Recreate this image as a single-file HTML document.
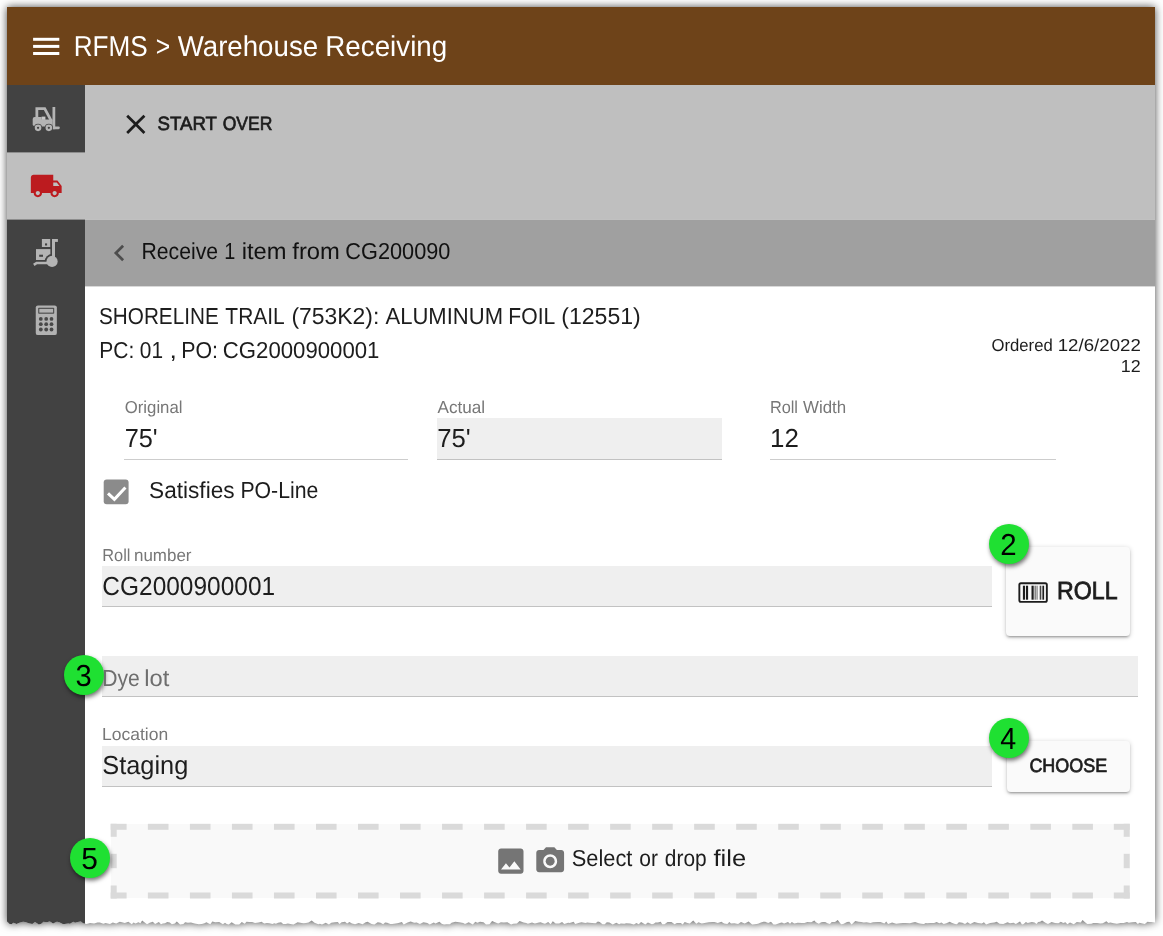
<!DOCTYPE html>
<html>
<head>
<meta charset="utf-8">
<title>RFMS Warehouse Receiving</title>
<style>
html,body{margin:0;padding:0;}
body{width:1163px;height:936px;overflow:hidden;background:#fefefe;font-family:"Liberation Sans",sans-serif;position:relative;color:#1d1d1d;}
#wrap{position:absolute;left:0;top:0;width:1163px;height:936px;filter:drop-shadow(0 0.5px 4.5px rgba(0,0,0,.72));}
#app{position:absolute;left:0;top:0;width:1163px;height:936px;background:#fff;clip-path:polygon(7.0px 7.0px,1155.0px 7.0px,1155.0px 923.0px,1155.0px 922.6px,1151.7px 921.9px,1149.2px 921.9px,1147.5px 921.8px,1144.8px 924.0px,1142.6px 923.5px,1139.5px 922.8px,1137.8px 924.1px,1135.8px 922.0px,1132.1px 922.2px,1128.8px 922.7px,1127.0px 921.9px,1123.7px 922.9px,1120.5px 923.0px,1116.9px 923.7px,1113.8px 923.2px,1110.3px 922.5px,1108.4px 922.9px,1106.4px 921.3px,1102.8px 923.3px,1100.4px 923.6px,1097.3px 923.0px,1093.2px 923.0px,1091.5px 923.7px,1087.3px 924.0px,1084.7px 922.0px,1082.6px 920.1px,1080.7px 922.4px,1076.8px 921.9px,1073.8px 924.2px,1070.0px 922.5px,1067.4px 924.2px,1065.4px 922.2px,1063.2px 923.1px,1060.9px 921.7px,1058.4px 923.3px,1055.0px 923.1px,1051.6px 921.9px,1048.0px 924.1px,1045.4px 922.8px,1042.1px 920.6px,1040.1px 921.7px,1038.1px 922.0px,1036.5px 924.1px,1034.5px 922.4px,1031.9px 922.0px,1027.7px 923.0px,1025.9px 922.0px,1023.6px 924.0px,1022.0px 924.4px,1020.0px 921.6px,1015.8px 924.1px,1013.6px 922.7px,1010.0px 923.2px,1007.5px 922.3px,1003.3px 924.1px,999.6px 923.8px,996.7px 921.7px,994.3px 922.4px,990.2px 923.0px,986.1px 924.4px,983.9px 922.3px,981.8px 923.4px,978.0px 923.0px,974.3px 921.9px,970.3px 923.9px,967.5px 922.2px,965.0px 923.9px,962.4px 922.8px,958.9px 922.2px,956.9px 924.2px,955.0px 924.0px,951.6px 922.7px,949.7px 921.7px,946.4px 923.2px,943.7px 924.1px,941.5px 922.4px,939.3px 923.3px,936.6px 922.1px,934.1px 923.0px,930.2px 922.9px,927.2px 923.2px,925.6px 922.9px,924.0px 923.9px,921.2px 923.7px,918.7px 923.2px,915.1px 922.0px,912.8px 922.5px,909.9px 923.3px,905.9px 922.9px,903.0px 923.1px,900.2px 923.2px,896.2px 923.7px,892.1px 922.4px,888.1px 924.1px,886.2px 921.6px,884.4px 923.6px,880.5px 922.1px,877.1px 922.1px,873.0px 922.3px,870.4px 923.1px,866.6px 922.2px,863.7px 922.6px,861.3px 922.1px,858.5px 921.8px,855.3px 921.0px,851.6px 924.4px,849.3px 921.8px,847.0px 922.1px,843.1px 924.0px,841.1px 924.3px,837.7px 920.1px,835.0px 921.9px,831.7px 921.9px,829.9px 924.1px,827.5px 923.2px,825.2px 922.1px,822.9px 922.0px,821.2px 922.3px,818.8px 923.8px,815.9px 922.2px,814.3px 920.5px,811.2px 922.2px,807.2px 922.0px,804.5px 923.1px,801.9px 923.1px,797.7px 922.7px,794.3px 923.5px,791.8px 921.9px,790.0px 923.8px,788.0px 921.9px,784.1px 923.6px,781.9px 922.5px,779.8px 922.9px,775.7px 924.4px,773.5px 924.4px,771.0px 921.7px,768.2px 923.1px,765.2px 921.7px,763.4px 921.8px,761.0px 922.4px,758.0px 923.8px,754.6px 924.2px,752.1px 924.5px,748.6px 921.5px,744.7px 923.5px,741.0px 922.1px,738.1px 924.0px,734.4px 923.3px,731.0px 923.6px,729.3px 922.1px,727.4px 924.0px,724.2px 923.5px,721.3px 921.7px,717.8px 923.1px,714.5px 921.9px,712.2px 921.9px,708.7px 922.3px,704.6px 923.1px,701.7px 923.6px,698.5px 922.3px,696.3px 923.8px,693.2px 920.4px,689.8px 923.6px,687.5px 923.1px,684.7px 922.0px,682.6px 924.4px,680.9px 923.0px,676.8px 923.0px,674.6px 924.3px,671.5px 922.1px,667.5px 922.1px,664.5px 924.2px,662.3px 924.2px,660.7px 921.7px,657.9px 922.5px,655.4px 922.6px,653.8px 923.8px,651.9px 924.3px,647.9px 922.5px,645.3px 924.5px,642.8px 922.9px,641.1px 922.0px,638.7px 924.3px,636.4px 923.1px,633.9px 924.4px,630.1px 923.5px,626.1px 923.2px,624.4px 923.8px,620.8px 923.5px,619.1px 924.3px,616.3px 922.7px,612.7px 924.4px,609.4px 922.5px,606.8px 922.2px,604.7px 924.2px,602.5px 924.2px,599.7px 922.1px,597.9px 921.4px,595.6px 923.3px,592.1px 922.9px,589.1px 922.8px,587.3px 922.5px,585.4px 923.1px,581.6px 922.3px,579.3px 922.8px,575.2px 924.1px,573.6px 921.8px,569.7px 923.0px,568.1px 922.8px,564.3px 924.1px,562.1px 922.0px,559.1px 923.6px,555.6px 923.5px,552.8px 921.3px,550.6px 924.3px,548.2px 922.1px,545.0px 923.7px,543.2px 923.2px,540.6px 922.3px,539.0px 922.5px,534.9px 923.5px,532.0px 922.4px,527.9px 923.7px,526.3px 923.1px,523.6px 922.4px,519.6px 920.9px,516.9px 923.6px,513.2px 923.8px,511.1px 924.4px,507.4px 922.3px,503.8px 922.5px,500.9px 922.2px,498.2px 923.6px,496.2px 922.8px,492.1px 921.0px,489.5px 924.2px,486.0px 924.5px,483.5px 922.2px,480.0px 921.8px,477.4px 922.7px,475.3px 921.7px,472.8px 924.4px,468.7px 922.3px,465.0px 924.0px,463.3px 923.0px,459.3px 922.2px,455.3px 921.8px,451.6px 922.8px,449.9px 924.3px,446.3px 924.2px,444.0px 924.4px,441.7px 923.7px,439.4px 921.7px,435.4px 923.5px,433.8px 922.4px,429.7px 924.4px,427.4px 922.9px,423.4px 922.2px,419.9px 924.0px,416.7px 922.6px,414.2px 922.7px,410.6px 921.4px,407.6px 922.6px,403.7px 924.5px,401.9px 922.0px,398.4px 923.0px,395.7px 923.4px,392.2px 924.1px,390.3px 924.1px,387.2px 922.7px,385.1px 922.4px,383.1px 924.2px,380.6px 922.8px,377.7px 922.3px,374.4px 924.5px,371.6px 924.0px,367.6px 921.8px,365.7px 922.2px,362.6px 924.3px,358.7px 923.0px,355.1px 924.3px,352.0px 923.4px,349.4px 922.1px,347.1px 923.4px,345.0px 921.7px,341.6px 922.2px,339.5px 923.9px,337.8px 922.0px,334.7px 922.3px,331.3px 922.8px,328.9px 924.4px,325.8px 922.7px,322.0px 924.5px,319.9px 923.7px,318.3px 924.2px,314.5px 922.8px,311.7px 920.5px,308.5px 922.5px,305.9px 923.1px,303.6px 923.2px,301.7px 923.1px,297.6px 922.3px,293.5px 924.4px,291.8px 924.3px,287.8px 923.4px,285.8px 923.9px,283.2px 924.1px,281.1px 922.3px,278.1px 922.8px,275.9px 923.7px,274.2px 923.3px,272.5px 924.0px,269.3px 923.2px,266.9px 922.9px,264.2px 923.5px,261.5px 921.8px,258.6px 922.4px,255.0px 923.0px,252.2px 922.0px,249.4px 922.0px,246.5px 921.8px,244.7px 923.8px,241.8px 921.9px,239.2px 924.4px,235.4px 924.5px,231.6px 922.2px,228.8px 924.4px,226.7px 923.9px,225.0px 922.7px,222.9px 924.2px,219.2px 922.1px,215.2px 922.3px,212.3px 921.4px,210.3px 924.3px,206.4px 922.2px,204.5px 923.2px,201.9px 924.1px,198.8px 924.2px,194.6px 923.5px,191.0px 922.4px,187.9px 922.7px,185.1px 922.2px,183.4px 924.0px,180.1px 924.5px,176.8px 921.5px,174.8px 923.4px,171.9px 924.2px,169.7px 922.5px,167.2px 922.0px,165.0px 923.3px,162.9px 923.4px,160.9px 924.3px,158.9px 922.0px,155.1px 923.9px,152.8px 921.7px,149.7px 922.7px,147.0px 924.3px,144.7px 922.6px,142.1px 920.4px,140.4px 923.2px,138.4px 922.3px,135.5px 923.5px,133.5px 922.6px,131.8px 924.2px,128.3px 921.7px,124.8px 923.0px,122.0px 922.3px,119.8px 921.8px,116.2px 923.6px,112.8px 922.4px,110.0px 923.9px,107.7px 923.5px,105.6px 922.9px,103.4px 923.8px,99.8px 922.6px,97.4px 922.4px,94.1px 923.6px,90.0px 923.0px,86.6px 924.1px,83.1px 923.3px,80.9px 921.4px,79.0px 921.8px,75.0px 922.7px,73.3px 921.8px,70.0px 923.7px,68.3px 923.4px,64.5px 924.0px,62.8px 924.1px,58.7px 922.0px,56.8px 921.8px,53.1px 923.5px,49.9px 921.4px,46.3px 922.3px,43.6px 921.8px,41.3px 923.7px,38.8px 924.4px,35.0px 921.9px,32.3px 923.9px,28.8px 923.2px,25.0px 922.0px,23.0px 921.7px,19.4px 922.8px,16.5px 923.9px,13.6px 922.7px,11.3px 924.3px,9.2px 923.7px,7.3px 921.5px,7.0px 923.0px);}
.abs{position:absolute;}
.t{position:absolute;white-space:nowrap;line-height:1;transform-origin:left center;text-rendering:geometricPrecision;}
svg{position:absolute;left:0;top:0;overflow:visible;}
.fld{position:absolute;background:#efefef;border-bottom:1.3px solid #c2c2c2;box-sizing:border-box;}
.ul{position:absolute;height:1.3px;background:#cdcdcd;}
.badge{position:absolute;width:40px;height:40px;border-radius:50%;background:#1fe032;box-shadow:1px 2.5px 4px rgba(0,0,0,.55);}
.btn{position:absolute;background:#fafafa;border-radius:4px;box-shadow:0 1px 5px rgba(0,0,0,.2),0 2px 2px rgba(0,0,0,.14),0 3px 1px -2px rgba(0,0,0,.12);}
</style>
</head>
<body>
<div id="wrap">
<div id="app">
  <svg width="1163" height="936" viewBox="0 0 1163 936">
    <rect x="7" y="7" width="1148" height="78" fill="#6e4319"/>
    <rect x="7" y="85" width="78" height="850" fill="#424242"/>
    <rect x="7" y="152.4" width="78" height="67.2" fill="#bfbfbf"/>
    <rect x="85" y="85" width="1070" height="134.6" fill="#bfbfbf"/>
    <rect x="85" y="219.6" width="1070" height="66.8" fill="#a0a0a0"/>
  </svg>

  <!-- fields -->
  <div class="ul" style="left:123.8px;top:458.7px;width:284.2px;"></div>
  <div class="fld" style="left:436.7px;top:418px;width:285.8px;height:42px;"></div>
  <div class="ul" style="left:770.3px;top:458.7px;width:285.3px;"></div>
  <div class="fld" style="left:102.2px;top:566.3px;width:889.8px;height:41px;"></div>
  <div class="fld" style="left:102.2px;top:656px;width:1036.1px;height:41px;"></div>
  <div class="fld" style="left:102.2px;top:745.6px;width:889.9px;height:41px;"></div>

  <!-- buttons -->
  <div class="btn" style="left:1006px;top:547px;width:123.7px;height:88.5px;"></div>
  <div class="btn" style="left:1006.8px;top:741.4px;width:123.2px;height:51px;"></div>

  <!-- drop zone -->
  <div class="abs" style="left:110.7px;top:823.8px;width:1019px;height:74.7px;background:#f9f9f9;"></div>

  <svg width="1163" height="936" viewBox="0 0 1163 936">
    <g fill="#dadada"><rect x="147.90" y="823.80" width="20.60" height="6.00"/><rect x="147.90" y="892.50" width="20.60" height="6.00"/><rect x="189.92" y="823.80" width="20.60" height="6.00"/><rect x="189.92" y="892.50" width="20.60" height="6.00"/><rect x="231.94" y="823.80" width="20.60" height="6.00"/><rect x="231.94" y="892.50" width="20.60" height="6.00"/><rect x="273.96" y="823.80" width="20.60" height="6.00"/><rect x="273.96" y="892.50" width="20.60" height="6.00"/><rect x="315.98" y="823.80" width="20.60" height="6.00"/><rect x="315.98" y="892.50" width="20.60" height="6.00"/><rect x="358.00" y="823.80" width="20.60" height="6.00"/><rect x="358.00" y="892.50" width="20.60" height="6.00"/><rect x="400.02" y="823.80" width="20.60" height="6.00"/><rect x="400.02" y="892.50" width="20.60" height="6.00"/><rect x="442.04" y="823.80" width="20.60" height="6.00"/><rect x="442.04" y="892.50" width="20.60" height="6.00"/><rect x="484.06" y="823.80" width="20.60" height="6.00"/><rect x="484.06" y="892.50" width="20.60" height="6.00"/><rect x="526.08" y="823.80" width="20.60" height="6.00"/><rect x="526.08" y="892.50" width="20.60" height="6.00"/><rect x="568.10" y="823.80" width="20.60" height="6.00"/><rect x="568.10" y="892.50" width="20.60" height="6.00"/><rect x="610.12" y="823.80" width="20.60" height="6.00"/><rect x="610.12" y="892.50" width="20.60" height="6.00"/><rect x="652.14" y="823.80" width="20.60" height="6.00"/><rect x="652.14" y="892.50" width="20.60" height="6.00"/><rect x="694.16" y="823.80" width="20.60" height="6.00"/><rect x="694.16" y="892.50" width="20.60" height="6.00"/><rect x="736.18" y="823.80" width="20.60" height="6.00"/><rect x="736.18" y="892.50" width="20.60" height="6.00"/><rect x="778.20" y="823.80" width="20.60" height="6.00"/><rect x="778.20" y="892.50" width="20.60" height="6.00"/><rect x="820.22" y="823.80" width="20.60" height="6.00"/><rect x="820.22" y="892.50" width="20.60" height="6.00"/><rect x="862.24" y="823.80" width="20.60" height="6.00"/><rect x="862.24" y="892.50" width="20.60" height="6.00"/><rect x="904.26" y="823.80" width="20.60" height="6.00"/><rect x="904.26" y="892.50" width="20.60" height="6.00"/><rect x="946.28" y="823.80" width="20.60" height="6.00"/><rect x="946.28" y="892.50" width="20.60" height="6.00"/><rect x="988.30" y="823.80" width="20.60" height="6.00"/><rect x="988.30" y="892.50" width="20.60" height="6.00"/><rect x="1030.32" y="823.80" width="20.60" height="6.00"/><rect x="1030.32" y="892.50" width="20.60" height="6.00"/><rect x="1072.34" y="823.80" width="20.60" height="6.00"/><rect x="1072.34" y="892.50" width="20.60" height="6.00"/><rect x="110.70" y="823.80" width="15.90" height="6.00"/><rect x="110.70" y="823.80" width="6.00" height="13.00"/><rect x="1113.80" y="823.80" width="15.90" height="6.00"/><rect x="1123.70" y="823.80" width="6.00" height="13.00"/><rect x="110.70" y="892.50" width="15.90" height="6.00"/><rect x="110.70" y="885.50" width="6.00" height="13.00"/><rect x="1113.80" y="892.50" width="15.90" height="6.00"/><rect x="1123.70" y="885.50" width="6.00" height="13.00"/><rect x="110.70" y="853.80" width="6.00" height="14.40"/><rect x="1123.70" y="853.80" width="6.00" height="14.40"/></g>
    <!-- hamburger -->
    <g fill="#fff"><rect x="33.1" y="37.8" width="26.2" height="3"/><rect x="33.1" y="44.9" width="26.2" height="3"/><rect x="33.1" y="52" width="26.2" height="3"/></g>
    <!-- close X -->
    <g transform="translate(119.36,107.86) scale(1.37)"><path fill="#1d1d1d" d="M19 6.41L17.59 5 12 10.59 6.41 5 5 6.41 10.59 12 5 17.59 6.41 19 12 13.41 17.59 19 19 17.59 13.41 12z"/></g>
    <!-- chevron -->
    <g transform="translate(102.97,236.5) scale(1.37)"><path fill="#4d4d4d" d="M15.41 7.41L14 6l-6 6 6 6 1.41-1.41L10.83 12z"/></g>
    <!-- forklift -->
    <g fill="#b4b4b4">
      <path d="M36.85,117.6 V108.6 H44.7 L51.3,120.8" fill="none" stroke="#b4b4b4" stroke-width="2.8" stroke-linejoin="miter"/>
      <rect x="52.5" y="107" width="2.75" height="22.2"/>
      <path d="M52.5,126.5 H58.5 a1.35,1.35 0 0 1 0,2.7 H52.5z"/>
      <path d="M32.7,118.9 a2,2 0 0 1 2,-2 H41.6 V119.6 H52.6 V126.6 H34.4 L32.7,124.9z"/>
      <rect x="41.6" y="116.6" width="3.8" height="3.2" fill="#c8c8c8"/>
      <circle cx="38.05" cy="127.85" r="4.05" fill="#424242"/><circle cx="38.05" cy="127.85" r="3.3"/><circle cx="38.05" cy="127.85" r="1.15" fill="#424242"/>
      <circle cx="48.85" cy="127.85" r="4.05" fill="#424242"/><circle cx="48.85" cy="127.85" r="3.3"/><circle cx="48.85" cy="127.85" r="1.15" fill="#424242"/>
    </g>
    <!-- truck -->
    <g transform="translate(29.45,169.25) scale(1.4)"><path fill="#bc1b1f" d="M20 8h-3V4H3c-1.1 0-2 .9-2 2v11h2c0 1.66 1.34 3 3 3s3-1.34 3-3h6c0 1.66 1.34 3 3 3s3-1.34 3-3h2v-5l-3-4zM6 18.5c-.83 0-1.5-.67-1.5-1.5s.67-1.5 1.5-1.5 1.5.67 1.5 1.5-.67 1.5-1.5 1.5zm13.5-9l1.96 2.5H17V9.500h2.5zm-1.5 9c-.83 0-1.5-.67-1.5-1.5s.67-1.5 1.5-1.5 1.5.67 1.5 1.5-.67 1.5-1.5 1.5z"/></g>
    <!-- hand truck -->
    <g fill="#b4b4b4">
      <rect x="41.9" y="239" width="8.3" height="8"/>
      <rect x="45" y="243.4" width="2.1" height="2.1" fill="#424242"/>
      <rect x="36" y="249.1" width="14.4" height="10.9"/>
      <circle cx="52.05" cy="261.4" r="7.3" fill="#424242"/>
      <rect x="39.2" y="254.7" width="3.8" height="2.1" fill="#424242"/>
      <rect x="52" y="239" width="3" height="19"/>
      <rect x="52" y="239" width="5.9" height="2.9"/>
      <circle cx="52.05" cy="261.4" r="5.6"/>
      <path d="M33.8,264.9 L36.7,262.95 H48" fill="none" stroke="#b4b4b4" stroke-width="2.6"/>
    </g>
    <!-- calculator -->
    <g>
      <rect x="35.76" y="305.4" width="21.1" height="29.7" rx="2.2" fill="#b2b2b2"/>
      <rect x="38.2" y="307.8" width="16" height="5.9" rx="0.8" fill="#4c4c4c"/>
      <rect x="39.3" y="308.9" width="13.8" height="3.7" fill="#b2b2b2"/>
      <g fill="#484848">
        <circle cx="40.8" cy="318.9" r="1.9"/><circle cx="46.2" cy="318.9" r="1.9"/><circle cx="51.5" cy="318.9" r="1.9"/>
        <circle cx="40.8" cy="324.2" r="1.9"/><circle cx="46.2" cy="324.2" r="1.9"/><circle cx="51.5" cy="324.2" r="1.9"/>
        <circle cx="40.8" cy="329.5" r="1.9"/><circle cx="46.2" cy="329.5" r="1.9"/><circle cx="51.5" cy="329.5" r="1.9"/>
      </g>
    </g>
    <!-- checkbox -->
    <rect x="103.7" y="479.4" width="24.9" height="24.8" rx="3" fill="#8b8b8b"/>
    <path d="M108,493.3 L114.4,499.3 L125.4,487.4" fill="none" stroke="#fff" stroke-width="3"/>
    <!-- barcode -->
    <rect x="1019.35" y="583.25" width="27.5" height="18.6" rx="1.6" fill="none" stroke="#1d1d1d" stroke-width="1.9"/>
    <g fill="#1d1d1d">
      <rect x="1022.9" y="585.7" width="2.2" height="14"/>
      <rect x="1026" y="585.7" width="2.1" height="14"/>
      <rect x="1031.5" y="585.7" width="2.2" height="14"/>
      <rect x="1034.6" y="585.7" width="1.1" height="14" fill="#555"/>
      <rect x="1036.6" y="585.7" width="0.9" height="14" fill="#555"/>
      <rect x="1039.7" y="585.7" width="1.6" height="14" fill="#444"/>
      <rect x="1042.4" y="585.7" width="1.7" height="14"/>
    </g>
    <!-- image icon -->
    <g transform="translate(494,844.3) scale(1.405)"><path fill="#757575" d="M21 19V5c0-1.1-.9-2-2-2H5c-1.1 0-2 .9-2 2v14c0 1.100.9 2 2 2h14c1.100 0 2-.9 2-2zM8.500 13.500l2.500 3.010L14.500 12l4.500 6H5l3.500-4.500z"/></g>
    <!-- camera icon -->
    <g transform="translate(533.5,844.5) scale(1.39)" fill="#757575"><circle cx="12" cy="12" r="3.2"/><path d="M9 2L7.170 4H4c-1.100 0-2 .9-2 2v12c0 1.100.9 2 2 2h16c1.100 0 2-.9 2-2V6c0-1.100-.9-2-2-2h-3.170L15 2H9zm3 15c-2.760 0-5-2.240-5-5s2.240-5 5-5 5 2.240 5 5-2.240 5-5 5z"/></g>
  </svg>

  <!-- badges -->
  <div class="badge" style="left:988.9px;top:523.8px;"></div>
  <div class="badge" style="left:63.8px;top:654.9px;"></div>
  <div class="badge" style="left:988.9px;top:717.9px;"></div>
  <div class="badge" style="left:69.9px;top:838px;"></div>

  <div class="t" id="t1a" style="left:73px;top:33px;font-size:28.8px;color:#fff;transform:translate(0.71px,0.22px) scaleX(0.9080);">RFMS</div>
  <div class="t" id="t1b" style="left:155px;top:33px;font-size:28.8px;color:#fff;transform:translate(0.87px,0.25px) scaleX(0.8600);">&gt;</div>
  <div class="t" id="t1c" style="left:177px;top:33px;font-size:28.8px;color:#fff;transform:translate(0.66px,0.26px) scaleX(0.9606);">Warehouse</div>
  <div class="t" id="t1d" style="left:325px;top:33px;font-size:28.8px;color:#fff;transform:translate(0.32px,0.28px) scaleX(0.9636);">Receiving</div>
  <div class="t" id="t2a" style="left:157px;top:115px;font-size:19.2px;color:#1d1d1d;transform:translate(0.54px,0.01px) scaleX(0.9718);-webkit-text-stroke:0.7px #1d1d1d;">START</div>
  <div class="t" id="t2b" style="left:222px;top:115px;font-size:19.2px;color:#1d1d1d;transform:translate(0.70px,0.03px) scaleX(0.9137);-webkit-text-stroke:0.7px #1d1d1d;">OVER</div>
  <div class="t" id="t3a" style="left:141px;top:239px;font-size:23.1px;color:#111;transform:translate(0.40px,0.99px) scaleX(0.9187);">Receive</div>
  <div class="t" id="t3b" style="left:224px;top:239px;font-size:23.1px;color:#111;transform:translate(0.36px,0.83px) scaleX(0.8600);">1</div>
  <div class="t" id="t3c" style="left:241px;top:239px;font-size:23.1px;color:#111;transform:translate(0.67px,0.78px) scaleX(1.0259);">item</div>
  <div class="t" id="t3d" style="left:292px;top:239px;font-size:23.1px;color:#111;transform:translate(0.31px,0.65px) scaleX(1.0289);">from</div>
  <div class="t" id="t3e" style="left:345px;top:239px;font-size:23.1px;color:#111;transform:translate(0.34px,0.86px) scaleX(0.9407);">CG200090</div>
  <div class="t" id="t4a" style="left:99px;top:304px;font-size:23.1px;color:#1d1d1d;transform:translate(0.03px,0.60px) scaleX(0.8967);">SHORELINE</div>
  <div class="t" id="t4b" style="left:225px;top:304px;font-size:23.1px;color:#1d1d1d;transform:translate(0.35px,0.62px) scaleX(0.9075);">TRAIL</div>
  <div class="t" id="t4c" style="left:291px;top:305px;font-size:23.1px;color:#1d1d1d;transform:translate(0.49px,0.48px) scaleX(0.9917);">(753K2):</div>
  <div class="t" id="t4d" style="left:385px;top:305px;font-size:23.1px;color:#1d1d1d;transform:translate(0.49px,0.49px) scaleX(0.9540);">ALUMINUM</div>
  <div class="t" id="t4e" style="left:508px;top:304px;font-size:23.1px;color:#1d1d1d;transform:translate(0.36px,0.65px) scaleX(0.9145);">FOIL</div>
  <div class="t" id="t4f" style="left:561px;top:304px;font-size:23.1px;color:#1d1d1d;transform:translate(0.23px,0.53px) scaleX(0.9989);">(12551)</div>
  <div class="t" id="t5a" style="left:99px;top:338px;font-size:23.1px;color:#1d1d1d;transform:translate(0.33px,0.59px) scaleX(0.9101);">PC:</div>
  <div class="t" id="t5b" style="left:139px;top:338px;font-size:23.1px;color:#1d1d1d;transform:translate(0.87px,0.78px) scaleX(0.9023);">01</div>
  <div class="t" id="t5c" style="left:169px;top:339px;font-size:23.1px;color:#1d1d1d;transform:translate(0.58px,0.11px) scaleX(1.1500);">,</div>
  <div class="t" id="t5d" style="left:181px;top:338px;font-size:23.1px;color:#1d1d1d;transform:translate(0.14px,0.72px) scaleX(0.9251);">PO:</div>
  <div class="t" id="t5e" style="left:222px;top:338px;font-size:23.1px;color:#1d1d1d;transform:translate(0.85px,0.52px) scaleX(0.9602);">CG2000900001</div>
  <div class="t" id="t6a" style="left:991px;top:337px;font-size:17.3px;color:#1d1d1d;transform:translate(0.48px,0.13px) scaleX(0.9661);">Ordered</div>
  <div class="t" id="t6b" style="left:1057px;top:337px;font-size:17.3px;color:#1d1d1d;transform:translate(0.74px,0.17px) scaleX(1.0802);">12/6/2022</div>
  <div class="t" id="t7" style="left:1120px;top:357px;font-size:17.3px;color:#1d1d1d;transform:translate(0.81px,0.84px) scaleX(1.0368);">12</div>
  <div class="t" id="t8" style="left:124px;top:398px;font-size:17.3px;color:#777;transform:translate(0.73px,0.77px) scaleX(0.9694);">Original</div>
  <div class="t" id="t9" style="left:124px;top:424px;font-size:26px;color:#1d1d1d;transform:translate(0.65px,0.91px) scaleX(0.9733);">75'</div>
  <div class="t" id="t10" style="left:437px;top:398px;font-size:17.3px;color:#777;transform:translate(0.54px,0.95px) scaleX(0.9910);">Actual</div>
  <div class="t" id="t11" style="left:437px;top:424px;font-size:26px;color:#1d1d1d;transform:translate(0.17px,0.91px) scaleX(0.9881);">75'</div>
  <div class="t" id="t12a" style="left:769px;top:398px;font-size:17.3px;color:#777;transform:translate(0.88px,0.63px) scaleX(0.9443);">Roll</div>
  <div class="t" id="t12b" style="left:803px;top:398px;font-size:17.3px;color:#777;transform:translate(0.02px,0.97px) scaleX(0.9772);">Width</div>
  <div class="t" id="t13" style="left:769px;top:424px;font-size:26px;color:#1d1d1d;transform:translate(1.00px,0.99px) scaleX(0.9947);">12</div>
  <div class="t" id="t14a" style="left:149px;top:478px;font-size:23.1px;color:#1d1d1d;transform:translate(0.05px,0.76px) scaleX(0.9798);">Satisfies</div>
  <div class="t" id="t14b" style="left:240px;top:478px;font-size:23.1px;color:#1d1d1d;transform:translate(0.40px,0.77px) scaleX(0.9204);">PO-Line</div>
  <div class="t" id="t15a" style="left:102px;top:546px;font-size:17.3px;color:#777;transform:translate(0.28px,0.71px) scaleX(0.9462);">Roll</div>
  <div class="t" id="t15b" style="left:133px;top:546px;font-size:17.3px;color:#777;transform:translate(0.99px,0.85px) scaleX(0.9817);">number</div>
  <div class="t" id="t16" style="left:102px;top:572px;font-size:26px;color:#1d1d1d;transform:translate(0.35px,0.81px) scaleX(0.9409);">CG2000900001</div>
  <div class="t" id="t17" style="left:1057px;top:578px;font-size:24.9px;color:#1d1d1d;transform:translate(0.05px,0.94px) scaleX(0.9307);-webkit-text-stroke:0.8px #1d1d1d;">ROLL</div>
  <div class="t" id="t18a" style="left:102px;top:667px;font-size:23.1px;color:#6e6e6e;transform:translate(0.21px,0.47px) scaleX(0.9143);">Dye</div>
  <div class="t" id="t18b" style="left:144px;top:667px;font-size:23.1px;color:#6e6e6e;transform:translate(0.34px,0.25px) scaleX(1.0296);">lot</div>
  <div class="t" id="t19" style="left:102px;top:726px;font-size:17.3px;color:#777;transform:translate(0.08px,0.06px) scaleX(1.0108);">Location</div>
  <div class="t" id="t20" style="left:102px;top:752px;font-size:26px;color:#1d1d1d;transform:translate(0.22px,0.01px) scaleX(0.9760);">Staging</div>
  <div class="t" id="t21" style="left:1029px;top:757px;font-size:19.2px;color:#1d1d1d;transform:translate(0.38px,0.24px) scaleX(0.9347);-webkit-text-stroke:0.7px #1d1d1d;">CHOOSE</div>
  <div class="t" id="t22a" style="left:571px;top:847px;font-size:23.1px;color:#1d1d1d;transform:translate(0.75px,0.11px) scaleX(0.9455);">Select</div>
  <div class="t" id="t22b" style="left:639px;top:847px;font-size:23.1px;color:#1d1d1d;transform:translate(0.36px,0.41px) scaleX(0.9112);">or</div>
  <div class="t" id="t22c" style="left:664px;top:847px;font-size:23.1px;color:#1d1d1d;transform:translate(0.81px,0.08px) scaleX(0.9050);">drop</div>
  <div class="t" id="t22d" style="left:713px;top:847px;font-size:23.1px;color:#1d1d1d;transform:translate(0.43px,0.06px) scaleX(1.1065);">file</div>
  <div class="t" id="b2" style="left:1000px;top:530px;font-size:30.4px;color:#000;transform:translate(0.34px,0.27px) scaleX(0.9699);">2</div>
  <div class="t" id="b3" style="left:75px;top:661px;font-size:30.4px;color:#000;transform:translate(0.62px,0.07px) scaleX(0.9607);">3</div>
  <div class="t" id="b4" style="left:1000px;top:723px;font-size:30.4px;color:#000;transform:translate(0.22px,0.67px) scaleX(0.9419);">4</div>
  <div class="t" id="b5" style="left:81px;top:844px;font-size:30.4px;color:#000;transform:translate(0.19px,0.07px) scaleX(0.9839);">5</div>
</div>
</div>
</body>
</html>
